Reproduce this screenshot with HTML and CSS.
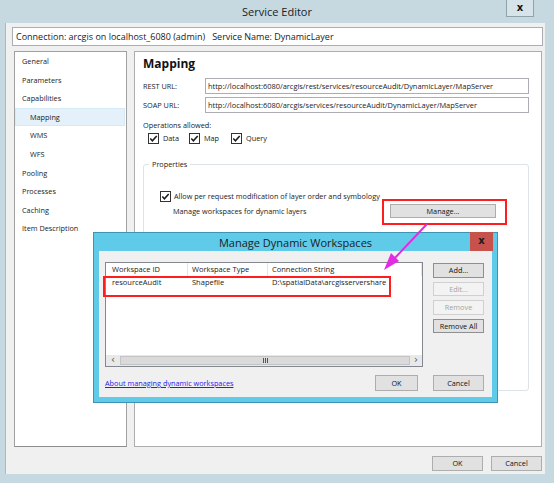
FILE: index.html
```html
<!DOCTYPE html>
<html>
<head>
<meta charset="utf-8">
<title>Service Editor</title>
<link rel="stylesheet" href="styles.css">
</head>
<body>
<div class="window">
  <div class="titlebar">
    <span></span>
    <span class="title">Service Editor</span>
    <span class="close">x</span>
  </div>
  <div class="client">
    <div class="connbar">Connection: arcgis on localhost_6080 (admin)&nbsp;&nbsp;&nbsp;Service Name: DynamicLayer</div>
    <div class="main">
      <ul class="nav">
        <li>General</li>
        <li>Parameters</li>
        <li>Capabilities</li>
        <li class="sub selected">Mapping</li>
        <li class="sub">WMS</li>
        <li class="sub">WFS</li>
        <li>Pooling</li>
        <li>Processes</li>
        <li>Caching</li>
        <li>Item Description</li>
      </ul>
      <div class="panel">
        <h1 class="heading">Mapping</h1>
        <div class="field"><span class="flabel">REST URL:</span><span class="input">http://localhost:6080/arcgis/rest/services/resourceAudit/DynamicLayer/MapServer</span></div>
        <div class="field second"><span class="flabel">SOAP URL:</span><span class="input">http://localhost:6080/arcgis/services/resourceAudit/DynamicLayer/MapServer</span></div>
        <div class="ops-label">Operations allowed:</div>
        <div class="ops">
          <span class="chk chk-data"><svg class="box" viewBox="0 0 11 11"><rect x="0.5" y="0.5" width="10" height="10" fill="#fff" stroke="#333"/><path d="M2.3 5.6 L4.4 7.8 L8.7 2.9" fill="none" stroke="#1a1a1a" stroke-width="1.5"/></svg>Data</span>
          <span class="chk chk-map"><svg class="box" viewBox="0 0 11 11"><rect x="0.5" y="0.5" width="10" height="10" fill="#fff" stroke="#333"/><path d="M2.3 5.6 L4.4 7.8 L8.7 2.9" fill="none" stroke="#1a1a1a" stroke-width="1.5"/></svg>Map</span>
          <span class="chk"><svg class="box" viewBox="0 0 11 11"><rect x="0.5" y="0.5" width="10" height="10" fill="#fff" stroke="#333"/><path d="M2.3 5.6 L4.4 7.8 L8.7 2.9" fill="none" stroke="#1a1a1a" stroke-width="1.5"/></svg>Query</span>
        </div>
        <fieldset class="props">
          <legend>Properties</legend>
          <div class="allow"><svg class="box" viewBox="0 0 11 11"><rect x="0.5" y="0.5" width="10" height="10" fill="#fff" stroke="#333"/><path d="M2.3 5.6 L4.4 7.8 L8.7 2.9" fill="none" stroke="#1a1a1a" stroke-width="1.5"/></svg>Allow per request modification of layer order and symbology</div>
          <div class="manage-row"><span>Manage workspaces for dynamic layers</span><span class="btn manage">Manage...</span></div>
        </fieldset>
      </div>
    </div>
    <div class="footer"><span class="btn fbtn">OK</span><span class="btn fbtn">Cancel</span></div>
  </div>

  <div class="mark mark-manage"></div>

  <div class="dialog">
    <div class="dtitle">
      <span></span>
      <span class="dtitle-text">Manage Dynamic Workspaces</span>
      <span class="dclose">x</span>
    </div>
    <div class="dbody">
      <div class="dtop">
        <div class="list">
          <div class="lhead">
            <span>Workspace ID</span><span>Workspace Type</span><span>Connection String</span>
          </div>
          <div class="lrow">
            <span>resourceAudit</span><span>Shapefile</span><span>D:\spatialData\arcgisservershare</span>
          </div>
          <div class="lspace"></div>
          <div class="hscroll">
            <span class="sarrow">&#8249;</span>
            <span class="thumb"><span class="grip"></span></span>
            <span class="sarrow">&#8250;</span>
          </div>
        </div>
        <div class="dbtns">
          <span class="btn dbtn strong">Add...</span>
          <span class="btn dbtn disabled">Edit...</span>
          <span class="btn dbtn disabled">Remove</span>
          <span class="btn dbtn strong">Remove All</span>
        </div>
      </div>
      <div class="dbottom">
        <a class="help">About managing dynamic workspaces</a>
        <span class="btn dok">OK</span>
        <span class="btn dcancel">Cancel</span>
      </div>
    </div>
  </div>

  <div class="mark mark-row"></div>

  <svg class="arrow" viewBox="0 0 554 483" width="554" height="483">
    <line x1="427" y1="224" x2="393" y2="260" stroke="#e42be4" stroke-width="2"/>
    <polygon points="384,270 399,261 391,253" fill="#e42be4"/>
  </svg>
</div>
</body>
</html>
```

FILE: styles.css
```css
* { box-sizing: border-box; }
html, body { margin: 0; padding: 0; }
body {
  width: 554px;
  height: 483px;
  overflow: hidden;
  font-family: "Open Sans", "Liberation Sans", sans-serif;
  font-size: 7.3px;
  color: #1a1a1a;
  background: #c6d9e0;
}
.window {
  position: relative;
  width: 554px;
  height: 483px;
  background: #c6d9e0;
  display: flex;
  flex-direction: column;
}
.titlebar {
  height: 23px;
  flex: none;
  display: grid;
  grid-template-columns: 1fr auto 1fr;
  align-items: start;
}
.title {
  font-size: 11px;
  line-height: 23px;
  color: #222;
}
.close {
  justify-self: end;
  margin-right: 20px;
  width: 28px;
  height: 17px;
  border: 1px solid #8ea3ab;
  border-top: none;
  background: #d6e4e9;
  text-align: center;
  font: bold 10px/15px "DejaVu Sans", sans-serif;
  color: #111;
}
.client {
  flex: 1;
  margin: 0 9px 9px 5px;
  background: #f0f0f0;
  border-left: 1px solid #a9bac0;
  display: flex;
  flex-direction: column;
}
.connbar {
  margin: 4px 2px 0 6px;
  height: 19px;
  background: #fff;
  border: 1px solid #abadb3;
  font-size: 9px;
  line-height: 17px;
  padding-left: 3px;
  white-space: nowrap;
}
.main {
  margin-top: 5px;
  height: 396px;
  display: flex;
  gap: 7px;
  padding: 0 3px 0 8px;
}
.nav {
  width: 113px;
  margin: 0;
  padding: 0;
  list-style: none;
  background: #fff;
  border: 1px solid #a0a0a0;
  border-bottom-color: #8d8d8d;
}
.nav li {
  height: 18.6px;
  line-height: 18.6px;
  padding-left: 7px;
  margin: 0 1px 0 0;
}
.nav li.sub { padding-left: 15px; }
.nav li.selected {
  background: #e4f1fb;
  border: 1px solid #d5e9f7;
  line-height: 16.6px;
  padding-left: 14px;
}
.panel {
  flex: 1;
  background: #fff;
  border: 1px solid #adadad;
  padding: 4px 12px 0 8px;
  display: flex;
  flex-direction: column;
}
.heading {
  margin: 0;
  font-size: 12px;
  line-height: 16px;
  font-weight: 700;
  color: #111;
}
.field {
  display: flex;
  align-items: center;
  margin-top: 6px;
}
.field.second { margin-top: 3px; }
.flabel { width: 62px; flex: none; }
.input {
  flex: 1;
  height: 16px;
  border: 1px solid #abadb3;
  background: #fff;
  line-height: 14px;
  padding-left: 2px;
  font-size: 7.45px;
  white-space: nowrap;
}
.ops-label {
  margin-top: 7px;
  line-height: 10px;
}
.ops {
  margin-top: 3px;
  height: 11px;
  display: flex;
  padding-left: 5px;
}
.chk {
  display: flex;
  align-items: center;
  gap: 4px;
  line-height: 11px;
}
.chk-data { width: 41px; }
.chk-map { width: 42px; }
.box { width: 11px; height: 11px; flex: none; display: block; }
.props {
  margin: 14px 0 0 0;
  padding: 0;
  border: 1px solid #dce3e9;
  border-radius: 3px;
  height: 233px;
}
.props legend {
  margin-left: 5px;
  padding: 0 3px;
  line-height: 12px;
}
.allow {
  margin-top: 21px;
  padding-left: 16px;
  display: flex;
  align-items: center;
  gap: 3px;
  line-height: 11px;
}
.manage-row {
  margin-top: 2px;
  padding-left: 29px;
  display: grid;
  grid-template-columns: 217px 106px;
  align-items: center;
}
.btn {
  display: block;
  background: #e1e1e1;
  border: 1px solid #adadad;
  text-align: center;
  color: #111;
}
.manage { height: 14px; line-height: 12px; }
.footer {
  display: flex;
  justify-content: flex-end;
  gap: 8px;
  padding: 9px 3px 0 0;
}
.fbtn { width: 51px; height: 15px; line-height: 13px; }

.mark {
  position: absolute;
  border: 2px solid #ff1e1e;
}
.mark-manage { left: 382px; top: 199px; width: 125px; height: 26px; }
.mark-row { left: 103px; top: 276px; width: 288px; height: 21px; }

.dialog {
  position: absolute;
  left: 93px;
  top: 232px;
  width: 405px;
  height: 171px;
  background: #60cbe9;
  border: 1px solid #3f93b3;
  display: flex;
  flex-direction: column;
}
.dtitle {
  height: 18px;
  flex: none;
  display: grid;
  grid-template-columns: 1fr auto 1fr;
  align-items: start;
}
.dtitle-text {
  font-size: 11px;
  line-height: 19px;
  color: #1c1c1c;
}
.dclose {
  justify-self: end;
  margin: -1px 4px 0 0;
  width: 23px;
  height: 19px;
  background: #c7514b;
  text-align: center;
  font: bold 10px/18px "DejaVu Sans", sans-serif;
  color: #1a1a1a;
}
.dbody {
  flex: 1;
  margin: 0 5px 5px;
  background: #f0f0f0;
  padding: 11px 8px 6px 6px;
  display: flex;
  flex-direction: column;
}
.dtop {
  display: flex;
  gap: 10px;
  height: 105px;
}
.list {
  width: 318px;
  background: #fff;
  border: 1px solid #828790;
  display: flex;
  flex-direction: column;
}
.lhead, .lrow {
  display: grid;
  grid-template-columns: 82px 80px 1fr;
  white-space: nowrap;
  font-size: 7.5px;
}
.lhead { height: 13px; line-height: 13px; }
.lhead span { border-right: 1px solid #e5e5e5; padding-left: 4px; }
.lhead span:first-child, .lrow span:first-child { padding-left: 6px; }
.lrow { height: 12px; line-height: 12px; }
.lrow span { padding-left: 4px; }
.lspace { flex: 1; }
.hscroll {
  height: 11px;
  display: grid;
  grid-template-columns: 14px 1fr 12px;
  background: #e9e9e9;
}
.sarrow {
  text-align: center;
  font: 10px/10px "DejaVu Sans", sans-serif;
  color: #555;
}
.thumb {
  margin: 1px 0;
  background: #dadada;
  border: 1px solid #c3c3c3;
  display: flex;
  align-items: center;
  justify-content: center;
}
.grip {
  width: 5px;
  height: 5px;
  border-left: 1px solid #555;
  border-right: 1px solid #555;
  background: linear-gradient(#555, #555) center / 1px 100% no-repeat;
}
.dbtns {
  width: 51px;
  padding-top: 1px;
  display: flex;
  flex-direction: column;
  gap: 4px;
}
.dbtn { height: 14.5px; line-height: 12.5px; }
.dbtn.strong { border-color: #8f8f8f; }
.dbtn.disabled { color: #a3a3a3; border-color: #d0d0d0; background: #f3f3f3; }
.dbottom {
  margin-top: 8px;
  height: 16px;
  display: flex;
  align-items: center;
}
.help {
  flex: 1;
  color: #2323e8;
  text-decoration: underline;
}
.dok { width: 43px; height: 16px; line-height: 14px; margin-right: 15px; }
.dcancel { width: 51px; height: 16px; line-height: 14px; }

.arrow {
  position: absolute;
  left: 0;
  top: 0;
}
```
